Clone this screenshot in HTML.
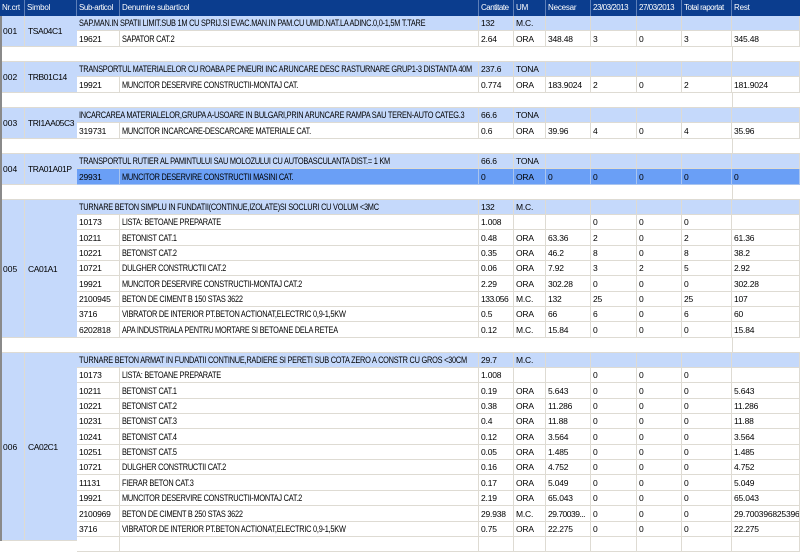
<!DOCTYPE html>
<html><head><meta charset="utf-8"><style>
*{margin:0;padding:0;box-sizing:border-box}
body{width:800px;height:541px;overflow:hidden;background:#fff;font-family:"Liberation Sans",sans-serif;font-size:8.5px;color:#000;position:relative}
.hd{position:absolute;left:0;top:0;width:800px;height:16px;background:#0b3d8e;color:#fff;display:flex}
.hd div{border-right:1px solid #5d7fb8;line-height:16px;padding-left:2px;white-space:nowrap;overflow:hidden;font-size:8px;letter-spacing:-0.2px}
.r{position:absolute;left:77px;width:723px;display:flex}
.r div{border-right:1px solid #dedbd3;border-bottom:1px solid #dedbd3;padding-left:2px;white-space:nowrap;overflow:hidden;display:flex;align-items:center;letter-spacing:-0.2px}
.g{background:#c5d9fb}
.s{background:#fff}
.sel{background:#6a9ff6}
.sel div{border-color:#a9c4ee}
.w1{width:43px}.w2{width:359px}.w12{width:402px}.w3{width:35px}.w4{width:32px}.w5{width:45px}.w6{width:46px}.w7{width:45px}.w8{width:50px}.w9{width:68px}
.t span{display:inline-block;font-size:9px;letter-spacing:-0.3px;transform:scaleX(.82);transform-origin:left center}
.b{position:absolute;left:2px;width:798px;background:#fff;border-bottom:1px solid #dedbd3}
.b::after{content:"";position:absolute;left:730px;top:0;bottom:0;border-left:1px solid #dedbd3}
.L{position:absolute;left:2px;width:75px;background:#c5d9fb;border-bottom:1px solid #dedbd3;display:flex;align-items:center}
.L .n{width:23px;padding-left:1px;border-right:1px solid #dedbd3;height:100%;display:flex;align-items:center}
.L .m{padding-left:3px;letter-spacing:-0.4px;white-space:nowrap}
.edge{position:absolute;left:0;top:16px;width:2px;height:525px;background:#8a8a8a}
</style></head><body>
<div class="hd"><div style="width:25px">Nr.crt</div><div style="width:52px">Simbol</div><div style="width:43px;letter-spacing:-0.4px">Sub-articol</div><div style="width:359px">Denumire subarticol</div><div style="width:35px;letter-spacing:-0.5px">Cantitate</div><div style="width:32px">UM</div><div style="width:45px">Necesar</div><div style="width:46px;letter-spacing:-0.5px">23/03/2013</div><div style="width:45px;letter-spacing:-0.5px">27/03/2013</div><div style="width:50px;letter-spacing:-0.5px">Total raportat</div><div style="width:68px;border:none">Rest</div></div>
<div class="edge"></div>

<div class="L" style="top:16px;height:31px"><span class="n">001</span><span class="m">TSA04C1</span></div>
<div class="r g" style="top:16px;height:15px"><div class="w12 t"><span>SAP.MAN.IN SPATII LIMIT.SUB 1M CU SPRIJ.SI EVAC.MAN.IN PAM.CU UMID.NAT.LA ADINC.0,0-1,5M T.TARE</span></div><div class="w3">132</div><div class="w4">M.C.</div><div class="w5"></div><div class="w6"></div><div class="w7"></div><div class="w8"></div><div class="w9"></div></div>
<div class="r s" style="top:31px;height:16px"><div class="w1">19621</div><div class="w2 t"><span>SAPATOR CAT.2</span></div><div class="w3">2.64</div><div class="w4">ORA</div><div class="w5">348.48</div><div class="w6">3</div><div class="w7">0</div><div class="w8">3</div><div class="w9">345.48</div></div>
<div class="b" style="top:47px;height:15px"></div>

<div class="L" style="top:62px;height:31px"><span class="n">002</span><span class="m">TRB01C14</span></div>
<div class="r g" style="top:62px;height:15px"><div class="w12 t"><span>TRANSPORTUL MATERIALELOR CU ROABA PE PNEURI INC ARUNCARE DESC RASTURNARE GRUP1-3 DISTANTA 40M</span></div><div class="w3">237.6</div><div class="w4">TONA</div><div class="w5"></div><div class="w6"></div><div class="w7"></div><div class="w8"></div><div class="w9"></div></div>
<div class="r s" style="top:77px;height:16px"><div class="w1">19921</div><div class="w2 t"><span>MUNCITOR DESERVIRE CONSTRUCTII-MONTAJ CAT.</span></div><div class="w3">0.774</div><div class="w4">ORA</div><div class="w5">183.9024</div><div class="w6">2</div><div class="w7">0</div><div class="w8">2</div><div class="w9">181.9024</div></div>
<div class="b" style="top:93px;height:15px"></div>

<div class="L" style="top:108px;height:31px"><span class="n">003</span><span class="m">TRI1AA05C3</span></div>
<div class="r g" style="top:108px;height:15px"><div class="w12 t"><span>INCARCAREA MATERIALELOR,GRUPA A-USOARE IN BULGARI,PRIN ARUNCARE RAMPA SAU TEREN-AUTO CATEG.3</span></div><div class="w3">66.6</div><div class="w4">TONA</div><div class="w5"></div><div class="w6"></div><div class="w7"></div><div class="w8"></div><div class="w9"></div></div>
<div class="r s" style="top:123px;height:16px"><div class="w1">319731</div><div class="w2 t"><span>MUNCITOR INCARCARE-DESCARCARE MATERIALE CAT.</span></div><div class="w3">0.6</div><div class="w4">ORA</div><div class="w5">39.96</div><div class="w6">4</div><div class="w7">0</div><div class="w8">4</div><div class="w9">35.96</div></div>
<div class="b" style="top:139px;height:15px"></div>

<div class="L" style="top:154px;height:31px"><span class="n">004</span><span class="m">TRA01A01P</span></div>
<div class="r g" style="top:154px;height:15px"><div class="w12 t"><span>TRANSPORTUL RUTIER AL PAMINTULUI SAU MOLOZULUI CU AUTOBASCULANTA DIST.= 1 KM</span></div><div class="w3">66.6</div><div class="w4">TONA</div><div class="w5"></div><div class="w6"></div><div class="w7"></div><div class="w8"></div><div class="w9"></div></div>
<div class="r sel" style="top:169px;height:16px"><div class="w1">29931</div><div class="w2 t"><span>MUNCITOR DESERVIRE CONSTRUCTII MASINI CAT.</span></div><div class="w3">0</div><div class="w4">ORA</div><div class="w5">0</div><div class="w6">0</div><div class="w7">0</div><div class="w8">0</div><div class="w9">0</div></div>
<div class="b" style="top:185px;height:15px"></div>

<div class="L" style="top:200px;height:138px"><span class="n">005</span><span class="m">CA01A1</span></div>
<div class="r g" style="top:200px;height:15px"><div class="w12 t"><span>TURNARE BETON SIMPLU IN FUNDATII(CONTINUE,IZOLATE)SI SOCLURI CU VOLUM &lt;3MC</span></div><div class="w3">132</div><div class="w4">M.C.</div><div class="w5"></div><div class="w6"></div><div class="w7"></div><div class="w8"></div><div class="w9"></div></div>
<div class="r s" style="top:215px;height:15px"><div class="w1">10173</div><div class="w2 t"><span>LISTA: BETOANE PREPARATE</span></div><div class="w3">1.008</div><div class="w4"></div><div class="w5"></div><div class="w6">0</div><div class="w7">0</div><div class="w8">0</div><div class="w9"></div></div>
<div class="r s" style="top:230px;height:16px"><div class="w1">10211</div><div class="w2 t"><span>BETONIST CAT.1</span></div><div class="w3">0.48</div><div class="w4">ORA</div><div class="w5">63.36</div><div class="w6">2</div><div class="w7">0</div><div class="w8">2</div><div class="w9">61.36</div></div>
<div class="r s" style="top:246px;height:15px"><div class="w1">10221</div><div class="w2 t"><span>BETONIST CAT.2</span></div><div class="w3">0.35</div><div class="w4">ORA</div><div class="w5">46.2</div><div class="w6">8</div><div class="w7">0</div><div class="w8">8</div><div class="w9">38.2</div></div>
<div class="r s" style="top:261px;height:15px"><div class="w1">10721</div><div class="w2 t"><span>DULGHER CONSTRUCTII CAT.2</span></div><div class="w3">0.06</div><div class="w4">ORA</div><div class="w5">7.92</div><div class="w6">3</div><div class="w7">2</div><div class="w8">5</div><div class="w9">2.92</div></div>
<div class="r s" style="top:276px;height:16px"><div class="w1">19921</div><div class="w2 t"><span>MUNCITOR DESERVIRE CONSTRUCTII-MONTAJ CAT.2</span></div><div class="w3">2.29</div><div class="w4">ORA</div><div class="w5">302.28</div><div class="w6">0</div><div class="w7">0</div><div class="w8">0</div><div class="w9">302.28</div></div>
<div class="r s" style="top:292px;height:15px"><div class="w1">2100945</div><div class="w2 t"><span>BETON DE CIMENT B 150 STAS 3622</span></div><div class="w3" style="letter-spacing:-0.5px">133.056</div><div class="w4">M.C.</div><div class="w5">132</div><div class="w6">25</div><div class="w7">0</div><div class="w8">25</div><div class="w9">107</div></div>
<div class="r s" style="top:307px;height:15px"><div class="w1">3716</div><div class="w2 t"><span>VIBRATOR DE INTERIOR PT.BETON ACTIONAT,ELECTRIC 0,9-1,5KW</span></div><div class="w3">0.5</div><div class="w4">ORA</div><div class="w5">66</div><div class="w6">6</div><div class="w7">0</div><div class="w8">6</div><div class="w9">60</div></div>
<div class="r s" style="top:322px;height:16px"><div class="w1">6202818</div><div class="w2 t"><span>APA INDUSTRIALA PENTRU MORTARE SI BETOANE DELA RETEA</span></div><div class="w3">0.12</div><div class="w4">M.C.</div><div class="w5">15.84</div><div class="w6">0</div><div class="w7">0</div><div class="w8">0</div><div class="w9">15.84</div></div>
<div class="b" style="top:338px;height:15px"></div>

<div class="L" style="top:353px;height:188px"><span class="n">006</span><span class="m">CA02C1</span></div>
<div class="r g" style="top:353px;height:15px"><div class="w12 t"><span>TURNARE BETON ARMAT IN FUNDATII CONTINUE,RADIERE SI PERETI SUB COTA ZERO A CONSTR CU GROS &lt;30CM</span></div><div class="w3">29.7</div><div class="w4">M.C.</div><div class="w5"></div><div class="w6"></div><div class="w7"></div><div class="w8"></div><div class="w9"></div></div>
<div class="r s" style="top:368px;height:15px"><div class="w1">10173</div><div class="w2 t"><span>LISTA: BETOANE PREPARATE</span></div><div class="w3">1.008</div><div class="w4"></div><div class="w5"></div><div class="w6">0</div><div class="w7">0</div><div class="w8">0</div><div class="w9"></div></div>
<div class="r s" style="top:383px;height:16px"><div class="w1">10211</div><div class="w2 t"><span>BETONIST CAT.1</span></div><div class="w3">0.19</div><div class="w4">ORA</div><div class="w5">5.643</div><div class="w6">0</div><div class="w7">0</div><div class="w8">0</div><div class="w9">5.643</div></div>
<div class="r s" style="top:399px;height:15px"><div class="w1">10221</div><div class="w2 t"><span>BETONIST CAT.2</span></div><div class="w3">0.38</div><div class="w4">ORA</div><div class="w5">11.286</div><div class="w6">0</div><div class="w7">0</div><div class="w8">0</div><div class="w9">11.286</div></div>
<div class="r s" style="top:414px;height:15px"><div class="w1">10231</div><div class="w2 t"><span>BETONIST CAT.3</span></div><div class="w3">0.4</div><div class="w4">ORA</div><div class="w5">11.88</div><div class="w6">0</div><div class="w7">0</div><div class="w8">0</div><div class="w9">11.88</div></div>
<div class="r s" style="top:429px;height:16px"><div class="w1">10241</div><div class="w2 t"><span>BETONIST CAT.4</span></div><div class="w3">0.12</div><div class="w4">ORA</div><div class="w5">3.564</div><div class="w6">0</div><div class="w7">0</div><div class="w8">0</div><div class="w9">3.564</div></div>
<div class="r s" style="top:445px;height:15px"><div class="w1">10251</div><div class="w2 t"><span>BETONIST CAT.5</span></div><div class="w3">0.05</div><div class="w4">ORA</div><div class="w5">1.485</div><div class="w6">0</div><div class="w7">0</div><div class="w8">0</div><div class="w9">1.485</div></div>
<div class="r s" style="top:460px;height:15px"><div class="w1">10721</div><div class="w2 t"><span>DULGHER CONSTRUCTII CAT.2</span></div><div class="w3">0.16</div><div class="w4">ORA</div><div class="w5">4.752</div><div class="w6">0</div><div class="w7">0</div><div class="w8">0</div><div class="w9">4.752</div></div>
<div class="r s" style="top:475px;height:16px"><div class="w1">11131</div><div class="w2 t"><span>FIERAR BETON CAT.3</span></div><div class="w3">0.17</div><div class="w4">ORA</div><div class="w5">5.049</div><div class="w6">0</div><div class="w7">0</div><div class="w8">0</div><div class="w9">5.049</div></div>
<div class="r s" style="top:491px;height:15px"><div class="w1">19921</div><div class="w2 t"><span>MUNCITOR DESERVIRE CONSTRUCTII-MONTAJ CAT.2</span></div><div class="w3">2.19</div><div class="w4">ORA</div><div class="w5">65.043</div><div class="w6">0</div><div class="w7">0</div><div class="w8">0</div><div class="w9">65.043</div></div>
<div class="r s" style="top:506px;height:16px"><div class="w1">2100969</div><div class="w2 t"><span>BETON DE CIMENT B 250 STAS 3622</span></div><div class="w3">29.938</div><div class="w4">M.C.</div><div class="w5" style="letter-spacing:-0.5px">29.70039...</div><div class="w6">0</div><div class="w7">0</div><div class="w8">0</div><div class="w9">29.7003968253968</div></div>
<div class="r s" style="top:522px;height:15px"><div class="w1">3716</div><div class="w2 t"><span>VIBRATOR DE INTERIOR PT.BETON ACTIONAT,ELECTRIC 0,9-1,5KW</span></div><div class="w3">0.75</div><div class="w4">ORA</div><div class="w5">22.275</div><div class="w6">0</div><div class="w7">0</div><div class="w8">0</div><div class="w9">22.275</div></div>
<div class="r s" style="top:537px;height:15px"><div class="w1"></div><div class="w2"></div><div class="w3"></div><div class="w4"></div><div class="w5"></div><div class="w6"></div><div class="w7"></div><div class="w8"></div><div class="w9"></div></div>
</body></html>
